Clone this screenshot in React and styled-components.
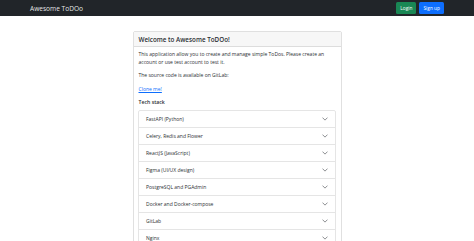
import styled, { createGlobalStyle } from "styled-components"

const GlobalStyle = createGlobalStyle`
    body {
        margin: 0;
        background: #fff;
        font-family: "Open Sans", "Noto Sans", sans-serif;
        color: #2b2f33;
    }
`

const stack = [
    "FastAPI (Python)",
    "Celery, Redis and Flower",
    "ReactJS (JavaScript)",
    "Figma (UI/UX design)",
    "PostgreSQL and PGAdmin",
    "Docker and Docker-compose",
    "GitLab",
    "Nginx",
]

function Chevron() {
    return (
        <svg width="6" height="6" viewBox="0 0 16 16" fill="none">
            <path d="M2 5L8 11L14 5" stroke="#33383d" strokeWidth="1.5" strokeLinecap="round" strokeLinejoin="round" />
        </svg>
    )
}

function App() {
    return (
        <>
            <GlobalStyle />
            <Navbar>
                <Brand>Awesome ToDOo</Brand>
                <Actions>
                    <Button $bg="#198754">Login</Button>
                    <Button $bg="#0d6efd">Sign up</Button>
                </Actions>
            </Navbar>
            <Main>
                <Card>
                    <CardHeader>Welcome to Awesome ToDOo!</CardHeader>
                    <CardBody>
                        <Text>This application allow you to create and manage simple ToDos. Please create an account or use test account to test it.</Text>
                        <Text>The source code is available on GitLab:</Text>
                        <Text><Link href="#">Clone me!</Link></Text>
                        <Subheading>Tech stack</Subheading>
                        <Accordion>
                            {stack.map((item) => (
                                <Item key={item}>
                                    <span>{item}</span>
                                    <Chevron />
                                </Item>
                            ))}
                        </Accordion>
                    </CardBody>
                </Card>
            </Main>
        </>
    )
}

const Navbar = styled.nav`
    height: 16px;
    background: #212529;
    display: flex;
    align-items: center;
    justify-content: space-between;
    padding: 0 30px;
`

const Brand = styled.div`
    color: rgba(255, 255, 255, 0.9);
    font-size: 6.6px;
`

const Actions = styled.div`
    display: flex;
    gap: 3px;
`

const Button = styled.button`
    background: ${(p) => p.$bg};
    color: #fff;
    border: none;
    border-radius: 1.5px;
    font-family: inherit;
    font-size: 4.8px;
    height: 12px;
    padding: 0 4px;
    cursor: pointer;
`

const Main = styled.main`
    display: flex;
    justify-content: center;
    padding-top: 15px;
`

const Card = styled.div`
    width: 207px;
    border: 1px solid rgba(0, 0, 0, 0.12);
    border-radius: 2px;
`

const CardHeader = styled.div`
    height: 14px;
    display: flex;
    align-items: center;
    padding: 0 5px;
    background: #f7f7f7;
    border-bottom: 1px solid rgba(0, 0, 0, 0.1);
    font-weight: 600;
    font-size: 6.3px;
`

const CardBody = styled.div`
    padding: 4px 5px 5px;
`

const Text = styled.p`
    margin: 0 0 6px;
    font-size: 5px;
    line-height: 1.5;
`

const Link = styled.a`
    color: #0d6efd;
`

const Subheading = styled.h6`
    margin: 0 0 3px;
    font-size: 5.2px;
    font-weight: 600;
    line-height: 1.5;
`

const Accordion = styled.div`
    border: 1px solid rgba(0, 0, 0, 0.1);
    border-radius: 2px;
    margin: 0 -0.5px;
`

const Item = styled.div`
    height: 16px;
    display: flex;
    align-items: center;
    justify-content: space-between;
    padding: 0 7px;
    font-size: 5px;
    & + & {
        border-top: 1px solid rgba(0, 0, 0, 0.1);
    }
`

export default App
